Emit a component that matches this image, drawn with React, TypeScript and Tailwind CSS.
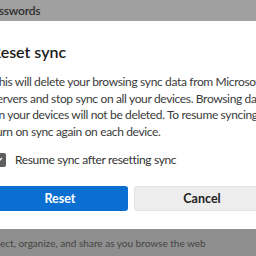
export default function App() {
  return (
    <div className="w-[256px] h-[256px] overflow-hidden bg-[#8f8f8f] font-['Lato',sans-serif] flex flex-col">
      <div className="h-[21px] shrink-0 bg-[#a0a0a0] flex items-center">
        <span className="ml-[-14px] text-[12px] font-semibold tracking-[-0.2px] text-[#2e2e2e] whitespace-nowrap leading-none">Passwords</span>
      </div>
      <div className="ml-[-32px] w-[326px] shrink-0 bg-white pt-[19px] pb-[18px] px-[24px]">
        <h2 className="-ml-px text-[16px] font-semibold text-[#1b1b1b] leading-[24px] whitespace-nowrap">Reset sync</h2>
        <p className="mt-[10px] text-[12px] tracking-[-0.35px] leading-[16.6px] text-[#3b3b3b] whitespace-nowrap">
          This will delete your browsing sync data from Microsoft
          <br />
          servers and stop sync on all your devices. Browsing data
          <br />
          on your devices will not be deleted. To resume syncing,
          <br />
          turn on sync again on each device.
        </p>
        <label className="mt-[12px] flex items-center gap-[9px] h-[16px]">
          <span className="w-[14px] h-[14px] rounded-[2px] bg-[#5e5e5e] flex items-center justify-center">
            <svg viewBox="0 0 12 12" className="w-[10px] h-[10px]" fill="none" stroke="white" strokeWidth="1.6">
              <path d="M2.5 6.2 L5 8.6 L9.6 3.4" />
            </svg>
          </span>
          <span className="text-[12px] tracking-[-0.35px] text-[#333] whitespace-nowrap">Resume sync after resetting sync</span>
        </label>
        <div className="mt-[18px] flex gap-[6px]">
          <button className="w-[136px] h-[25px] rounded-[3px] bg-[#0b6fd1] text-white text-[12.5px] font-bold">Reset</button>
          <button className="w-[136px] h-[25px] rounded-[3px] bg-[#ededed] border border-[#e2e2e2] text-[#222] text-[12.5px] font-bold">Cancel</button>
        </div>
      </div>
      <div className="flex-1">
        <span className="ml-[-17px] text-[10px] leading-[14px] text-[#444] whitespace-nowrap">Collect, organize, and share as you browse the web</span>
      </div>
    </div>
  );
}
